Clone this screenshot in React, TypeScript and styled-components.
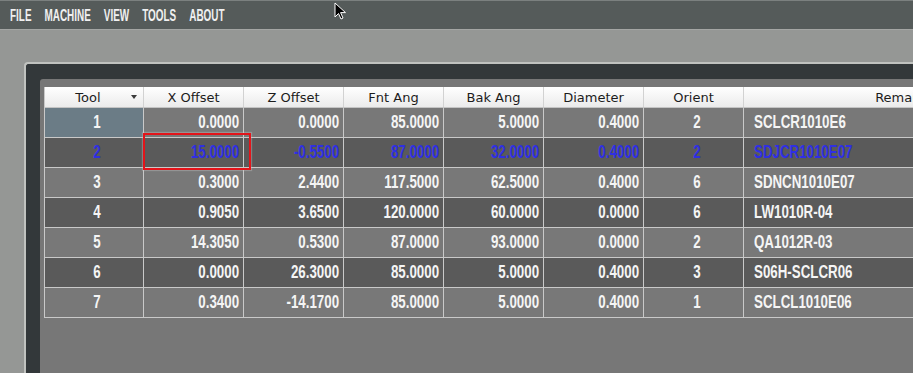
import React from 'react';
import styled, {createGlobalStyle} from "styled-components";

const COLUMNS = `99px repeat(6, 100px) 320px`

const headers = ['Tool', 'X Offset', 'Z Offset', 'Fnt Ang', 'Bak Ang', 'Diameter', 'Orient', 'Remarks']

const rows: (string | number)[][] = [
    [1, '0.0000', '0.0000', '85.0000', '5.0000', '0.4000', 2, 'SCLCR1010E6'],
    [2, '15.0000', '-0.5500', '87.0000', '32.0000', '0.4000', 2, 'SDJCR1010E07'],
    [3, '0.3000', '2.4400', '117.5000', '62.5000', '0.4000', 6, 'SDNCN1010E07'],
    [4, '0.9050', '3.6500', '120.0000', '60.0000', '0.0000', 6, 'LW1010R-04'],
    [5, '14.3050', '0.5300', '87.0000', '93.0000', '0.0000', 2, 'QA1012R-03'],
    [6, '0.0000', '26.3000', '85.0000', '5.0000', '0.4000', 3, 'S06H-SCLCR06'],
    [7, '0.3400', '-14.1700', '85.0000', '5.0000', '0.4000', 1, 'SCLCL1010E06'],
]

const CURRENT_ROW = 1

type Align = 'left' | 'center' | 'right'

const alignFor = (col: number): Align => {
    if (col === 0 || col === 6) return 'center'
    if (col === 7) return 'left'
    return 'right'
}

const App = () => {
    return (
        <Screen>
            <GlobalStyle/>
            <MenuBar>
                <MenuList>
                    {['FILE', 'MACHINE', 'VIEW', 'TOOLS', 'ABOUT'].map(item => (
                        <MenuItem key={item}>{item}</MenuItem>
                    ))}
                </MenuList>
            </MenuBar>
            <Workspace>
                <Panel>
                    <TableArea>
                        <Table>
                            <HeaderRow>
                                {headers.map((h, i) => (
                                    <HeaderCell key={h}>
                                        <HeaderLabel $offset={i === 0}>{h}</HeaderLabel>
                                        {i === 0 && <SortArrow/>}
                                    </HeaderCell>
                                ))}
                            </HeaderRow>
                            {rows.map((row, r) => (
                                <Row key={r} $dark={r % 2 === 1} $current={r === CURRENT_ROW}>
                                    {row.map((value, c) => (
                                        <Cell key={c} $align={alignFor(c)} $selected={r === 0 && c === 0}>
                                            <CellText $align={alignFor(c)}>{value}</CellText>
                                        </Cell>
                                    ))}
                                </Row>
                            ))}
                            <FocusFrame/>
                        </Table>
                    </TableArea>
                </Panel>
            </Workspace>
            <Cursor width="13" height="19" viewBox="0 0 13 19">
                <path d="M1 1 L1 15 L4.5 11.5 L7 17 L9 16 L6.6 10.6 L11.5 10.6 Z" fill="#000" stroke="#fff" strokeWidth="1"/>
            </Cursor>
        </Screen>
    );
};

export default App;

// ---------------------------
const GlobalStyle = createGlobalStyle`
  html, body {
    margin: 0;
    padding: 0;
    overflow: hidden;
    background: #959795;
  }
`

const Screen = styled.div`
  position: relative;
  width: 913px;
  height: 373px;
  display: flex;
  flex-direction: column;
  overflow: hidden;
`

const MenuBar = styled.div`
  height: 28px;
  flex-shrink: 0;
  display: flex;
  align-items: center;
  padding-left: 10px;
  background-color: #555b5a;
  border-top: 1px solid #7b807f;
  border-bottom: 1px solid #a4a6a4;
`

// the menu font is a tall condensed face; squeeze a regular bold sans to match
const MenuList = styled.div`
  display: flex;
  gap: 21px;
  transform: scaleX(0.62);
  transform-origin: left center;
`

const MenuItem = styled.span`
  font-family: "Liberation Sans", Arial, sans-serif;
  font-weight: 700;
  font-size: 16px;
  color: #f0f0f0;
  padding-top: 1px;
`

const Workspace = styled.div`
  flex: 1;
  display: flex;
  padding: 32px 0 0 24px;
  background-color: #959795;
  min-height: 0;
`

const Panel = styled.div`
  flex: 1;
  display: flex;
  padding: 15px 0 0 14px;
  background-color: #33383a;
  border-top: 2px solid #c0c2bf;
  border-left: 2px solid #c0c2bf;
  border-top-left-radius: 4px;
  min-width: 0;
`

const TableArea = styled.div`
  flex: 1;
  padding: 8px 0 0 4px;
  background-color: #777777;
  border-top-left-radius: 3px;
  overflow: hidden;
`

const Table = styled.div`
  position: relative;
  display: flex;
  flex-direction: column;
  width: max-content;
  border-left: 1px solid #c9c9c9;
`

const HeaderRow = styled.div`
  display: grid;
  grid-template-columns: ${COLUMNS};
  height: 21px;
  background: linear-gradient(#ffffff, #ebebeb);
  border-bottom: 1px solid #c4c4c4;
  box-sizing: border-box;
`

const HeaderCell = styled.div`
  display: flex;
  align-items: center;
  box-sizing: border-box;
  border-right: 1px solid #d2d2d2;
`

const HeaderLabel = styled.span<{ $offset?: boolean }>`
  flex: 1;
  text-align: center;
  font-family: "DejaVu Sans", sans-serif;
  font-size: 13px;
  color: #1c1c1c;
  padding-left: ${props => props.$offset ? '4px' : '0'};
`

const SortArrow = styled.span`
  width: 0;
  height: 0;
  margin: 0 6px 1px 4px;
  border-left: 3.5px solid transparent;
  border-right: 3.5px solid transparent;
  border-top: 4px solid #3a3a3a;
`

const Row = styled.div<{ $dark: boolean, $current: boolean }>`
  display: grid;
  grid-template-columns: ${COLUMNS};
  height: 30px;
  background-color: ${props => props.$dark ? '#5a5a5a' : '#787878'};
  color: ${props => props.$current ? '#2f2fe4' : '#f5f5f5'};
`

const Cell = styled.div<{ $align: Align, $selected?: boolean }>`
  display: flex;
  align-items: center;
  justify-content: ${props => props.$align === 'right' ? 'flex-end' : props.$align === 'center' ? 'center' : 'flex-start'};
  padding: ${props => props.$align === 'right' ? '0 4px 0 0' : props.$align === 'center' ? '0 0 0 7px' : '0 0 0 10px'};
  box-sizing: border-box;
  border-right: 1px solid #c9c9c9;
  border-bottom: 1px solid #c9c9c9;
  background-color: ${props => props.$selected ? '#6b7c86' : 'transparent'};
`

const CellText = styled.span<{ $align: Align }>`
  display: inline-block;
  font-family: "Liberation Sans", Arial, sans-serif;
  font-weight: 700;
  font-size: 18px;
  white-space: nowrap;
  transform: scaleX(0.74);
  transform-origin: ${props => props.$align} center;
`

const FocusFrame = styled.div`
  position: absolute;
  left: 98px;
  top: 46px;
  width: 108px;
  height: 37px;
  box-sizing: border-box;
  border: 2px solid #e3141a;
  box-shadow: 0 0 1px 1px rgba(200, 200, 200, 0.35);
  pointer-events: none;
`

const Cursor = styled.svg`
  position: absolute;
  left: 334px;
  top: 2px;
`
